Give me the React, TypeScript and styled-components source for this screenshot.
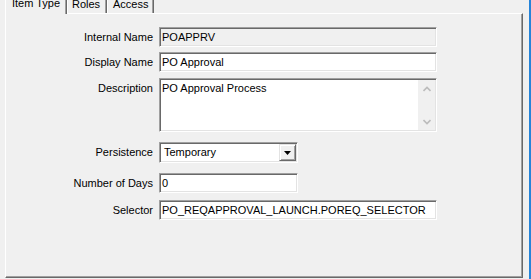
import React from 'react';
import styled, { createGlobalStyle } from 'styled-components';

const GlobalStyle = createGlobalStyle`
  html, body {
    margin: 0;
    padding: 0;
    background: #f0f0f0;
  }
  body {
    font-family: "Liberation Sans", Arial, sans-serif;
    font-size: 11px;
    color: #000;
  }
`;

interface TabInfo {
  label: string
  width: number
  pad: number
  active?: boolean
}

const tabs: TabInfo[] = [
  { label: 'Item Type', width: 62, pad: 6, active: true },
  { label: 'Roles', width: 40, pad: 4 },
  { label: 'Access', width: 47, pad: 5 },
];

function App() {
  return (
    <>
      <GlobalStyle />
      <Window>
        <Main>
          <TabRow>
            {tabs.map((t) => (
              <Tab key={t.label} $active={t.active} $width={t.width} $pad={t.pad}>
                {t.label}
              </Tab>
            ))}
          </TabRow>
          <Panel>
            <Row $gap={13}>
              <Label>Internal Name</Label>
              <TextBox $width={278} $disabled>POAPPRV</TextBox>
            </Row>
            <Row $gap={5}>
              <Label>Display Name</Label>
              <TextBox $width={278}>PO Approval</TextBox>
            </Row>
            <Row $gap={6}>
              <Label>Description</Label>
              <TextArea>
                <TextAreaBody>PO Approval Process</TextAreaBody>
                <ScrollBar>
                  <svg width="8" height="6" viewBox="0 0 8 6">
                    <polyline points="0.5,5 4,1.5 7.5,5" fill="none" stroke="#bcbcbc" strokeWidth="1.6" />
                  </svg>
                  <svg width="8" height="6" viewBox="0 0 8 6">
                    <polyline points="0.5,1 4,4.5 7.5,1" fill="none" stroke="#bcbcbc" strokeWidth="1.6" />
                  </svg>
                </ScrollBar>
              </TextArea>
            </Row>
            <Row $gap={10}>
              <Label>Persistence</Label>
              <Combo>
                <ComboText>Temporary</ComboText>
                <DropButton>
                  <svg width="7" height="4" viewBox="0 0 7 4">
                    <polygon points="0,0 7,0 3.5,4" fill="#000" />
                  </svg>
                </DropButton>
              </Combo>
            </Row>
            <Row $gap={10}>
              <Label>Number of Days</Label>
              <TextBox $width={139}>0</TextBox>
            </Row>
            <Row $gap={7}>
              <Label>Selector</Label>
              <TextBox $width={278}>PO_REQAPPROVAL_LAUNCH.POREQ_SELECTOR</TextBox>
            </Row>
          </Panel>
        </Main>
        <BlueEdge />
      </Window>
    </>
  );
}

export default App;

const Window = styled.div`
  display: flex;
  width: 531px;
  height: 279px;
  overflow: hidden;
`;

const Main = styled.div`
  width: 524px;
  padding-left: 5px;
  display: flex;
  flex-direction: column;
`;

const BlueEdge = styled.div`
  width: 2px;
  height: 100%;
  background: #2584d9;
`;

const TabRow = styled.div`
  display: flex;
  align-items: flex-end;
  height: 20px;
  margin-top: -6px;
  position: relative;
  z-index: 1;
`;

const Tab = styled.div<{ $active?: boolean; $width: number; $pad: number }>`
  box-sizing: border-box;
  width: ${(p) => p.$width}px;
  height: ${(p) => (p.$active ? 20 : 17)}px;
  margin-bottom: ${(p) => (p.$active ? 0 : 1)}px;
  padding-left: ${(p) => p.$pad}px;
  padding-top: ${(p) => (p.$active ? 3 : 2)}px;
  line-height: 13px;
  background: #f0f0f0;
  border-left: 1px solid #fff;
  border-right: 1px solid #696969;
  box-shadow: inset -1px 0 0 #a0a0a0;
  white-space: nowrap;
`;

const Panel = styled.div`
  box-sizing: border-box;
  width: 518px;
  height: 265px;
  margin-top: -1px;
  border-top: 1px solid #fff;
  border-left: 1px solid #fff;
  border-right: 1px solid #696969;
  border-bottom: 1px solid #696969;
  box-shadow: inset -1px -1px 0 #a0a0a0;
  display: flex;
  flex-direction: column;
`;

const Row = styled.div<{ $gap: number }>`
  display: flex;
  align-items: flex-start;
  margin-top: ${(p) => p.$gap}px;
`;

const Label = styled.div`
  width: 147px;
  margin-right: 6px;
  padding-top: 4px;
  text-align: right;
  line-height: 13px;
  white-space: nowrap;
`;

const sunken = `
  box-sizing: border-box;
  border: 1px solid;
  border-color: #a0a0a0 #fff #fff #a0a0a0;
  box-shadow: inset 1px 1px 0 #696969, inset -1px -1px 0 #e3e3e3;
`;

const TextBox = styled.div<{ $width: number; $disabled?: boolean }>`
  ${sunken}
  width: ${(p) => p.$width}px;
  height: 20px;
  padding: 0 2px;
  line-height: 18px;
  background: ${(p) => (p.$disabled ? '#f0f0f0' : '#fff')};
  white-space: nowrap;
  overflow: hidden;
`;

const TextArea = styled.div`
  ${sunken}
  width: 278px;
  height: 54px;
  background: #fff;
  display: flex;
  padding: 1px;
`;

const TextAreaBody = styled.div`
  flex: 1;
  padding: 2px 1px;
  line-height: 13px;
`;

const ScrollBar = styled.div`
  width: 17px;
  background: #f0f0f0;
  display: flex;
  flex-direction: column;
  align-items: center;
  justify-content: space-between;
  padding: 6px 0 5px;
  box-sizing: border-box;
`;

const Combo = styled.div`
  ${sunken}
  width: 139px;
  height: 21px;
  background: #fff;
  display: flex;
  align-items: center;
  padding: 1px;
`;

const ComboText = styled.div`
  flex: 1;
  padding-left: 3px;
  line-height: 17px;
`;

const DropButton = styled.div`
  box-sizing: border-box;
  width: 17px;
  height: 17px;
  background: #f0f0f0;
  border: 1px solid;
  border-color: #e3e3e3 #696969 #696969 #e3e3e3;
  box-shadow: inset 1px 1px 0 #fff, inset -1px -1px 0 #a0a0a0;
  display: flex;
  align-items: center;
  justify-content: center;
`;
